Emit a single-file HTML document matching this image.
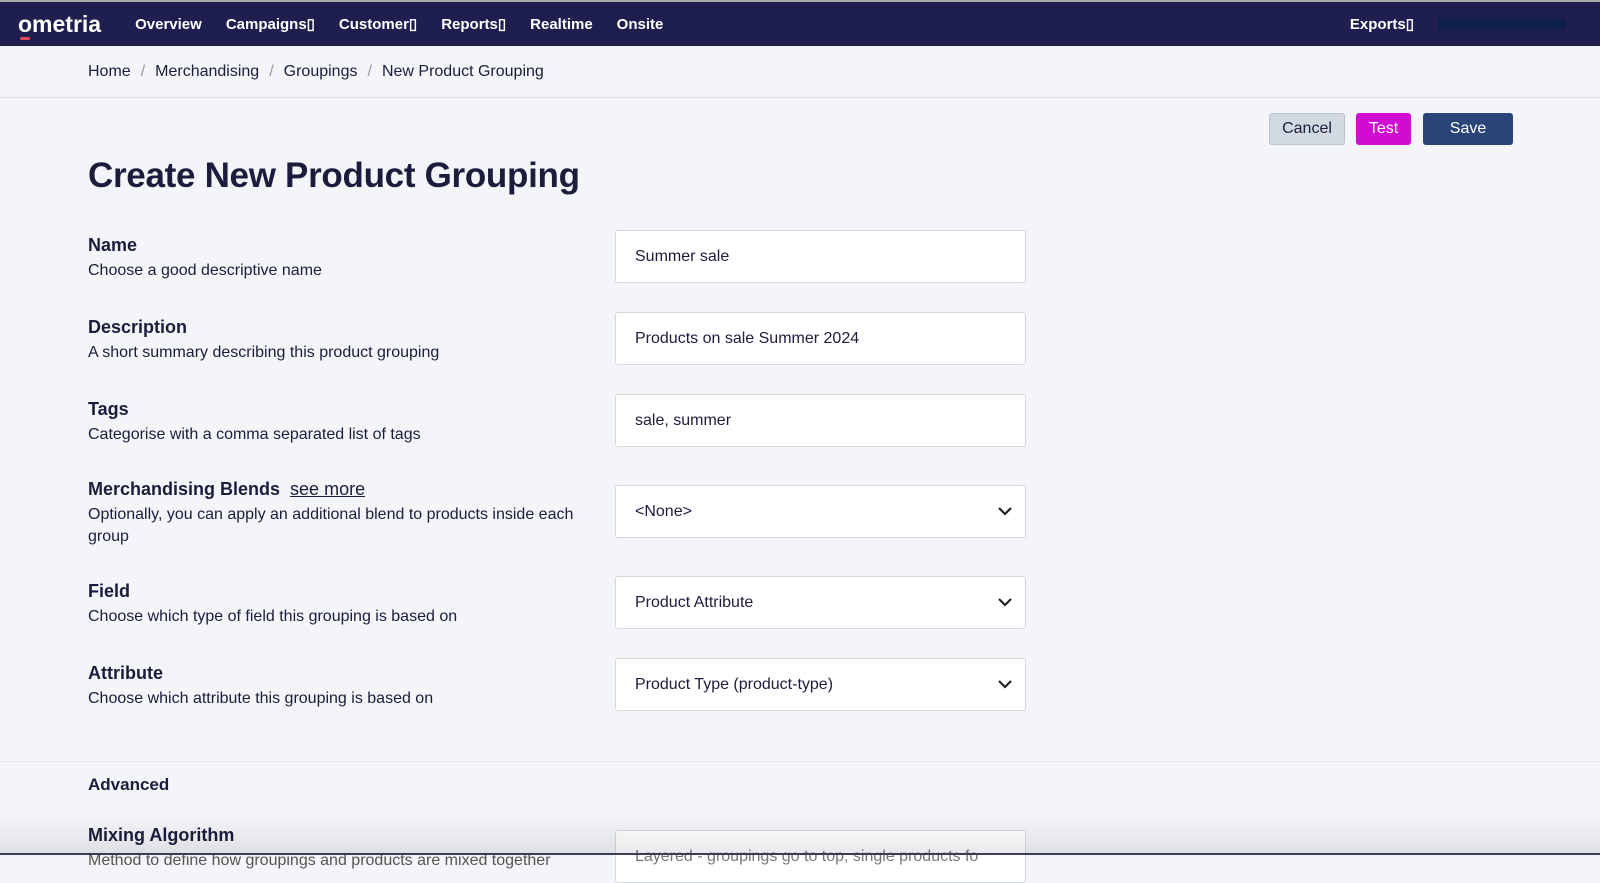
<!DOCTYPE html>
<html><head><meta charset="utf-8"><style>
*{box-sizing:border-box;margin:0;padding:0}
body{width:1600px;height:855px;overflow:hidden;background:#f4f5f8;font-family:"Liberation Sans",sans-serif;color:#1c1c3c;position:relative}
.nav{height:46px;background:#1f1f4f;border-top:2px solid #aaa;display:flex;align-items:center;color:#fff;font-weight:bold;font-size:15px}
.logo{margin-left:18px;font-size:23px;font-weight:bold;margin-right:34px;position:relative}
.logo:after{content:"";position:absolute;left:2px;bottom:-2px;width:10px;height:3px;border-radius:2px;background:#e8465a}
.nav a{margin-right:24px}
.bc{height:52px;border-bottom:1px solid #dfe2e8;display:flex;align-items:center;padding-left:88px;font-size:16px;color:#1c1c3c}
.bc span.s{color:#999;margin:0 10px}
.btn{position:absolute;top:113px;height:32px;border-radius:3px;font-size:16px;display:flex;align-items:center;justify-content:center}
h1{position:absolute;left:88px;top:156px;font-size:35px;font-weight:bold;letter-spacing:-0.3px}
.row{position:absolute;left:88px}
.row b{display:block;font-size:18px;margin-bottom:4px}
.row p{font-size:16px;width:505px;line-height:22px}
.inp{position:absolute;left:615px;width:411px;height:53px;background:#fff;border:1px solid #d4d8e0;border-radius:3px;font-size:16px;padding-left:19px;display:flex;align-items:center}
.chev{position:absolute;right:12px;top:19px}
u{font-weight:normal}
</style></head><body>
<div class="nav"><span class="logo">ometria</span><a>Overview</a><a>Campaigns▯</a><a>Customer▯</a><a>Reports▯</a><a>Realtime</a><a>Onsite</a>
<span style="margin-left:auto;margin-right:24px">Exports▯</span><span style="display:inline-block;width:128px;height:10px;background:#0d1d4e;margin-right:34px"></span></div>
<div class="bc">Home<span class="s">/</span>Merchandising<span class="s">/</span>Groupings<span class="s">/</span>New Product Grouping</div>
<div class="btn" style="left:1269px;width:76px;background:#d2d9e2;border:1px solid #b9c2cd;color:#1c1c3c">Cancel</div>
<div class="btn" style="left:1356px;width:55px;background:#d10cd1;color:#fff">Test</div>
<div class="btn" style="left:1423px;width:90px;background:#2a4577;color:#fff">Save</div>
<h1>Create New Product Grouping</h1>
<div class="row" style="top:235px"><b>Name</b><p>Choose a good descriptive name</p></div>
<div class="inp" style="top:230px">Summer sale</div>
<div class="row" style="top:317px"><b>Description</b><p>A short summary describing this product grouping</p></div>
<div class="inp" style="top:312px">Products on sale Summer 2024</div>
<div class="row" style="top:399px"><b>Tags</b><p>Categorise with a comma separated list of tags</p></div>
<div class="inp" style="top:394px">sale, summer</div>
<div class="row" style="top:479px"><b>Merchandising Blends&nbsp; <u>see more</u></b><p>Optionally, you can apply an additional blend to products inside each group</p></div>
<div class="inp" style="top:485px">&lt;None&gt;<svg class="chev" width="16" height="12" viewBox="0 0 16 12"><path d="M2 3l6 6 6-6" stroke="#222" stroke-width="2.2" fill="none"/></svg></div>
<div class="row" style="top:581px"><b>Field</b><p>Choose which type of field this grouping is based on</p></div>
<div class="inp" style="top:576px">Product Attribute<svg class="chev" width="16" height="12" viewBox="0 0 16 12"><path d="M2 3l6 6 6-6" stroke="#222" stroke-width="2.2" fill="none"/></svg></div>
<div class="row" style="top:663px"><b>Attribute</b><p>Choose which attribute this grouping is based on</p></div>
<div class="inp" style="top:658px">Product Type (product-type)<svg class="chev" width="16" height="12" viewBox="0 0 16 12"><path d="M2 3l6 6 6-6" stroke="#222" stroke-width="2.2" fill="none"/></svg></div>
<div style="position:absolute;left:0;top:761px;width:1600px;border-top:1px solid #e8eaee"></div>
<div class="row" style="top:775px"><b style="font-size:17px">Advanced</b></div>
<div class="row" style="top:825px"><b>Mixing Algorithm</b><p style="color:#555">Method to define how groupings and products are mixed together</p></div>
<div class="inp" style="top:830px;color:#777">Layered - groupings go to top, single products fo</div>
<div style="position:absolute;left:0;bottom:0;width:1600px;height:40px;background:linear-gradient(rgba(0,0,0,0),rgba(0,0,0,0.09))"></div>
<div style="position:absolute;left:0;bottom:0;width:1600px;height:2px;background:#3a3a5a"></div>
</body></html>
